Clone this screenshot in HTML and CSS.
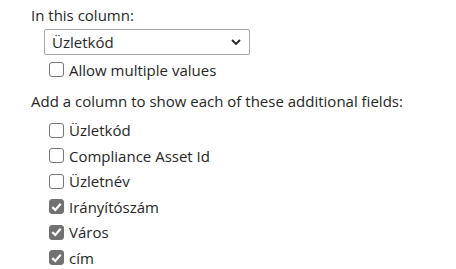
FILE: index.html
```html
<!DOCTYPE html>
<html>
<head>
<meta charset="utf-8">
<link rel="stylesheet" href="styles.css">
</head>
<body>
<div class="panel">
  <div class="label">In this column:</div>
  <div class="select-wrap">
    <select class="select"><option>Üzletkód</option></select>
    <svg class="chevron" width="10" height="6" viewBox="0 0 10 6"><path d="M1 1 L5 5 L9 1" fill="none" stroke="#222" stroke-width="1.8"/></svg>
  </div>
  <label class="row allow"><span class="box"></span><span>Allow multiple values</span></label>
  <div class="label heading">Add a column to show each of these additional fields:</div>
  <div class="list">
    <label class="row"><span class="box"></span><span>Üzletkód</span></label>
    <label class="row"><span class="box"></span><span>Compliance Asset Id</span></label>
    <label class="row"><span class="box"></span><span>Üzletnév</span></label>
    <label class="row"><span class="box checked"><svg width="11" height="10" viewBox="0 0 10 9"><path d="M1.2 4.6 L3.9 7.2 L8.8 1.6" fill="none" stroke="#fff" stroke-width="2"/></svg></span><span>Irányítószám</span></label>
    <label class="row"><span class="box checked"><svg width="11" height="10" viewBox="0 0 10 9"><path d="M1.2 4.6 L3.9 7.2 L8.8 1.6" fill="none" stroke="#fff" stroke-width="2"/></svg></span><span>Város</span></label>
    <label class="row"><span class="box checked"><svg width="11" height="10" viewBox="0 0 10 9"><path d="M1.2 4.6 L3.9 7.2 L8.8 1.6" fill="none" stroke="#fff" stroke-width="2"/></svg></span><span>cím</span></label>
  </div>
</div>
</body>
</html>
```
FILE: styles.css
```css
html, body {
  margin: 0;
  padding: 0;
  background: #fff;
}
.panel {
  padding: 5px 0 0 31px;
  font-family: "Open Sans", sans-serif;
  font-size: 15px;
  line-height: 20px;
  color: #262626;
}
.label {
  white-space: nowrap;
}
.heading {
  margin-top: 8px;
}
.select-wrap {
  position: relative;
  margin: 4px 0 0 13px;
  width: 206px;
  height: 26px;
}
.select {
  appearance: none;
  -webkit-appearance: none;
  box-sizing: border-box;
  width: 206px;
  height: 26px;
  margin: 0;
  padding: 0 0 0 7px;
  border: 1px solid #a6a6a6;
  border-radius: 2px;
  background: #fff;
  font-family: "Open Sans", sans-serif;
  font-size: 15px;
  color: #262626;
}
.chevron {
  position: absolute;
  right: 9px;
  top: 10px;
}
.row {
  display: flex;
  align-items: center;
  height: 25.5px;
  margin-left: 18px;
}
.allow {
  margin-top: 2px;
}
.box {
  box-sizing: border-box;
  display: flex;
  flex: none;
  align-items: center;
  justify-content: center;
  width: 15px;
  height: 15px;
  margin-right: 5px;
  border: 1px solid #767676;
  border-radius: 3px;
  background: #fff;
}
.box.checked {
  background: #717171;
  border-color: #717171;
}
.list {
  margin-top: 7px;
}
```
